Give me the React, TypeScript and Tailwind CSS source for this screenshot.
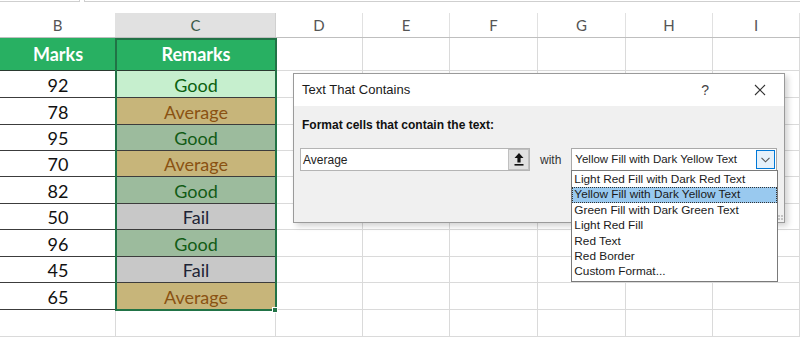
import React from "react";

const cols = [
  { key: "B", w: "w-[116px]" },
  { key: "C", w: "w-[160px]" },
  { key: "D", w: "w-[87px]" },
  { key: "E", w: "w-[87px]" },
  { key: "F", w: "w-[88px]" },
  { key: "G", w: "w-[88px]" },
  { key: "H", w: "w-[87px]" },
  { key: "I", w: "w-[87px]" },
];

type Remark = "Good" | "Average" | "Fail";

const rows: { mark: number; remark: Remark; h: string }[] = [
  { mark: 92, remark: "Good", h: "h-[27px]" },
  { mark: 78, remark: "Average", h: "h-[27px]" },
  { mark: 95, remark: "Good", h: "h-[26px]" },
  { mark: 70, remark: "Average", h: "h-[26px]" },
  { mark: 82, remark: "Good", h: "h-[27px]" },
  { mark: 50, remark: "Fail", h: "h-[26px]" },
  { mark: 96, remark: "Good", h: "h-[27px]" },
  { mark: 45, remark: "Fail", h: "h-[26px]" },
  { mark: 65, remark: "Average", h: "h-[27px]" },
];

const remarkStyle: Record<Remark, string> = {
  Good: "bg-[#9cbb9d] text-[#125c16]",
  Average: "bg-[#c7b57a] text-[#8a5212]",
  Fail: "bg-[#c8c8c8] text-[#1d2435]",
};

const formats = [
  "Light Red Fill with Dark Red Text",
  "Yellow Fill with Dark Yellow Text",
  "Green Fill with Dark Green Text",
  "Light Red Fill",
  "Red Text",
  "Red Border",
  "Custom Format...",
];

function EmptyCells() {
  return (
    <>
      {cols.slice(2).map((c) => (
        <div key={c.key} className={`${c.w} shrink-0 border-r border-b border-[#dadada]`} />
      ))}
    </>
  );
}

function Dialog() {
  return (
    <div className="absolute left-[293px] top-[73px] w-[492px] h-[150px] border border-[#9a9a9a] bg-[#f0f0f0] shadow-[3px_3px_6px_rgba(0,0,0,0.18)] font-['Liberation_Sans',sans-serif]">
      <div className="flex h-[32px] items-center bg-white pl-[8px] pr-[18px]">
        <span className="flex-1 text-[13px] text-[#1a1a1a]">Text That Contains</span>
        <span className="mr-[45px] text-[14px] text-[#444]">?</span>
        <svg width="12" height="12" viewBox="0 0 12 12" className="text-[#333]">
          <path d="M1 1L11 11M11 1L1 11" stroke="currentColor" strokeWidth="1.1" />
        </svg>
      </div>
      <div className="px-[8px] pt-[10px] text-[12px] font-bold text-[#111]">
        Format cells that contain the text:
      </div>
      <div className="mt-[14px] flex items-center pl-[6px]">
        <div className="flex h-[23px] w-[230px] items-center border border-[#b4b4b4] bg-white">
          <span className="flex-1 pl-[2px] text-[12px] text-[#222]">Average</span>
          <span className="grid h-[21px] w-[21px] place-items-center border border-[#c0c0c0] bg-[#e1e1e1]">
            <svg width="10" height="13" viewBox="0 0 10 13">
              <path d="M5 0L9.5 5H6.6V9.5H3.4V5H0.5Z" fill="#111" />
              <rect x="0.5" y="11" width="9" height="1.6" fill="#111" />
            </svg>
          </span>
        </div>
        <span className="ml-[10px] text-[12px] text-[#333]">with</span>
        <div className="relative ml-[10px] w-[206px]">
          <div className="flex h-[23px] items-center border border-[#a9a9a9] bg-white">
            <span className="flex-1 pl-[3px] text-[11.5px] text-[#222]">Yellow Fill with Dark Yellow Text</span>
            <span className="mr-[1px] grid h-[19px] w-[19px] place-items-center border border-[#0078d7] bg-[#e5f1fb]">
              <svg width="9" height="6" viewBox="0 0 9 6">
                <path d="M0.5 0.8L4.5 4.8L8.5 0.8" fill="none" stroke="#555" strokeWidth="1.1" />
              </svg>
            </span>
          </div>
          <div className="absolute left-0 top-[22px] w-[207px] border border-[#7a7a7a] bg-white py-[1px]">
            {formats.map((f, i) => (
              <div
                key={f}
                className={
                  i === 1
                    ? "h-[15.4px] border border-dotted border-[#333] bg-[#99c9ef] px-[1px] text-[11.8px] leading-[13.4px] text-[#1a1a1a]"
                    : "h-[15.4px] border border-transparent px-[1px] text-[11.8px] leading-[13.4px] text-[#1a1a1a]"
                }
              >
                {f}
              </div>
            ))}
          </div>
        </div>
      </div>
      <div className="absolute bottom-[2px] right-[1px] grid grid-cols-2 gap-[1px]">
        <span className="h-[2px] w-[2px] bg-[#c4c4c4]" />
        <span className="h-[2px] w-[2px] bg-[#c4c4c4]" />
        <span className="h-[2px] w-[2px] bg-[#c4c4c4]" />
        <span className="h-[2px] w-[2px] bg-[#c4c4c4]" />
      </div>
    </div>
  );
}

export default function App() {
  return (
    <div className="relative h-[337px] w-[800px] overflow-hidden bg-white font-['Lato',sans-serif]">
      {/* formula bar edge */}
      <div className="flex h-[13px] gap-[4px]">
        <div className="h-[2px] w-[80px] border-r border-b border-[#cfcfcf]" />
        <div className="h-[2px] flex-1 border-l border-b border-[#cfcfcf]" />
      </div>

      {/* column letters */}
      <div className="flex h-[25px] border-b border-[#bfbfbf]">
        {cols.map((c) => (
          <div
            key={c.key}
            className={
              c.key === "C"
                ? `${c.w} shrink-0 flex items-center justify-center border-r border-[#d0d0d0] bg-[#e1e1e1] text-[15px] text-[#3b5a48]`
                : `${c.w} shrink-0 flex items-center justify-center border-r border-[#e1e1e1] text-[15px] text-[#555]`
            }
          >
            {c.key}
          </div>
        ))}
      </div>

      {/* table header */}
      <div className="flex h-[33px]">
        <div className="flex w-[116px] shrink-0 items-center justify-center border-b border-[#2a3a30] bg-[#28b062] text-[18px] font-bold text-white">
          Marks
        </div>
        <div className="flex w-[160px] shrink-0 items-center justify-center border-b border-[#2a3a30] bg-[#28b062] text-[18px] font-bold text-white">
          Remarks
        </div>
        <EmptyCells />
      </div>

      {rows.map((r, i) => (
        <div key={i} className={`flex ${r.h}`}>
          <div className="flex w-[116px] shrink-0 items-center justify-center border-b border-[#3c3c3c] pt-[2px] text-[18px] text-[#111]">
            {r.mark}
          </div>
          <div
            className={`flex w-[160px] shrink-0 items-center justify-center border-b border-[#3c3c3c] pt-[2px] text-[18px] ${
              i === 0 ? "bg-[#c6efce] text-[#0b6110]" : remarkStyle[r.remark]
            }`}
          >
            {r.remark}
          </div>
          <EmptyCells />
        </div>
      ))}

      <div className="flex h-[27px]">
        <div className="w-[116px] shrink-0 border-r border-b border-[#dadada]" />
        <div className="w-[160px] shrink-0 border-r border-b border-[#dadada]" />
        <EmptyCells />
      </div>

      {/* selection outline on C */}
      <div className="pointer-events-none absolute left-[115px] top-[38px] h-[273px] w-[162px] border-2 border-[#217346]" />
      <div className="absolute left-[272px] top-[307px] h-[6px] w-[6px] border border-white bg-[#217346]" />

      <Dialog />
    </div>
  );
}
